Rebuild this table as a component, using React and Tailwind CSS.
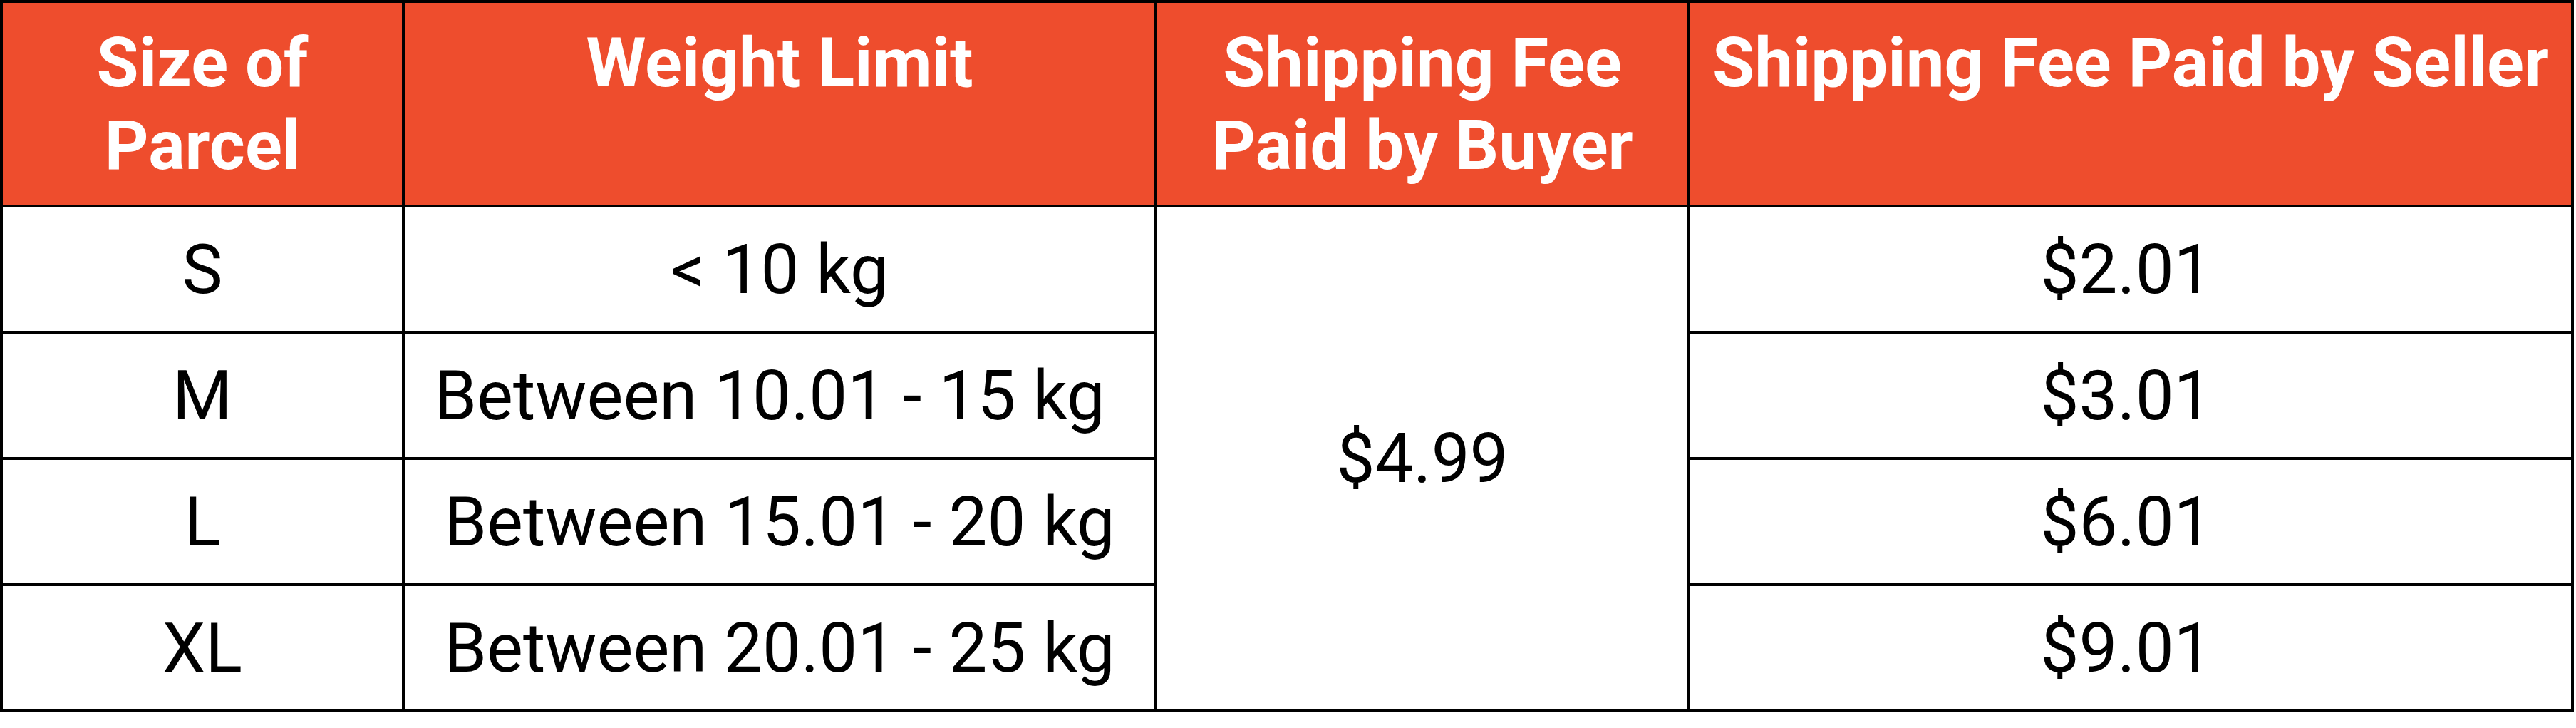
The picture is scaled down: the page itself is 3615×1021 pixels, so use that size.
const rows = [
  { size: "S", weight: "< 10 kg", seller: "$2.01" },
  { size: "M", weight: "Between 10.01 - 15 kg", seller: "$3.01", shift: true },
  { size: "L", weight: "Between 15.01 - 20 kg", seller: "$6.01" },
  { size: "XL", weight: "Between 20.01 - 25 kg", seller: "$9.01" },
];

export default function App() {
  return (
    <div className="min-h-screen bg-white" style={{ fontFamily: "Roboto, 'Liberation Sans', sans-serif" }}>
      <div className="grid w-[3612px] grid-cols-[560px_1052px_744px_1fr] grid-rows-[283px_173px_173px_173px_173px] gap-[4px] bg-black p-[4px] text-[96px] leading-[116px]">
        {/* Header */}
        <div className="bg-[#ee4d2d] pt-[26px] text-center font-bold text-white">
          Size of
          <br />
          Parcel
        </div>
        <div className="bg-[#ee4d2d] pt-[26px] text-center font-bold text-white">Weight Limit</div>
        <div className="bg-[#ee4d2d] pt-[26px] text-center font-bold text-white">
          Shipping Fee
          <br />
          Paid by Buyer
        </div>
        <div className="whitespace-nowrap bg-[#ee4d2d] pt-[26px] text-center font-bold text-white">
          Shipping Fee Paid by Seller
        </div>

        {/* Body */}
        {rows.map((row, i) => (
          <div key={row.size} className="contents">
            <div className="flex items-center justify-center bg-white text-black">{row.size}</div>
            <div
              className={
                row.shift
                  ? "flex items-center justify-center bg-white pr-[28px] text-black"
                  : "flex items-center justify-center bg-white text-black"
              }
            >
              {row.weight}
            </div>
            {i === 0 && (
              <div className="row-span-4 flex items-center justify-center bg-white text-black">$4.99</div>
            )}
            <div className="flex items-center justify-center bg-white pr-[12px] text-black">{row.seller}</div>
          </div>
        ))}
      </div>
    </div>
  );
}
